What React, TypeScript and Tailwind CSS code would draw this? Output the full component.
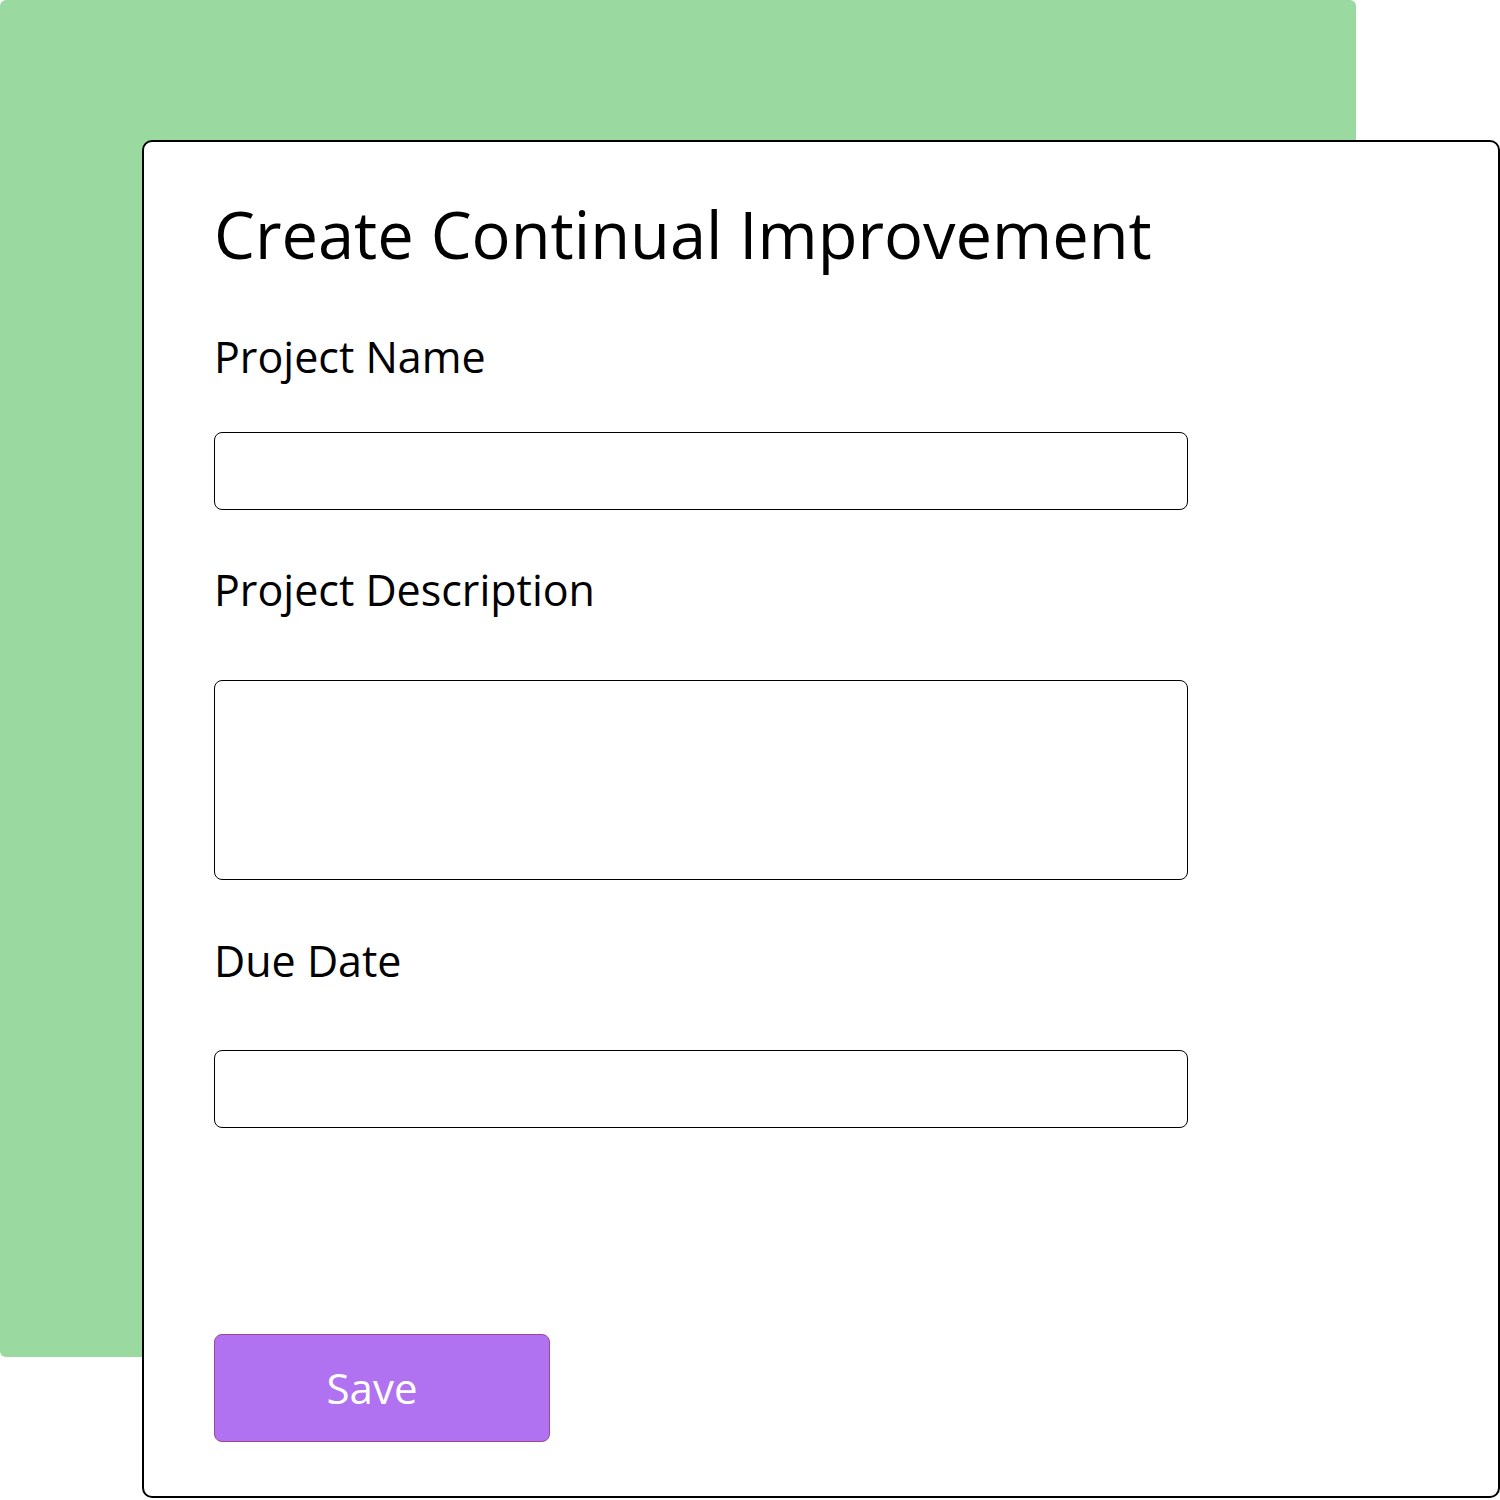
import React from 'react';

export default function App() {
  return (
    <div className="relative w-[1500px] h-[1500px] bg-white font-['Open_Sans',sans-serif] text-black">
      <div className="w-[1356px] h-[1357px] bg-[#9ad9a0] rounded-[6px]" />
      <div className="absolute left-[142px] top-[140px] w-[1358px] h-[1358px] bg-white border-2 border-black rounded-[10px] pl-[70px] pt-[60px] flex flex-col">
        <h1 className="text-[65px] leading-none font-normal">Create Continual Improvement</h1>

        <label className="mt-[68px] text-[43px] leading-none">Project Name</label>
        <input type="text" className="mt-[54px] w-[974px] h-[78px] border border-black rounded-[8px] outline-none" />

        <label className="mt-[58px] text-[43px] leading-none">Project Description</label>
        <textarea className="mt-[69px] w-[974px] h-[200px] border border-black rounded-[8px] outline-none resize-none" />

        <label className="mt-[59px] text-[43px] leading-none">Due Date</label>
        <input type="text" className="mt-[68px] w-[974px] h-[78px] border border-black rounded-[8px] outline-none" />

        <button className="mt-[206px] w-[336px] h-[108px] bg-[#b072f0] border border-[#a0449a] rounded-[8px] text-white text-[42px] leading-none pr-[20px]">
          Save
        </button>
      </div>
    </div>
  );
}
